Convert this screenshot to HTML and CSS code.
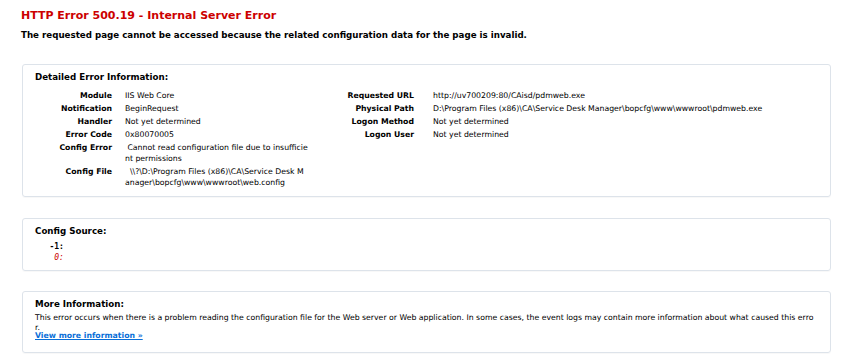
FILE: index.html
```html
<html>

<head>
  <meta charset="utf-8">
  <link rel="stylesheet" href="styles.css">
</head>

<body>
  <div id="header">
    <h1>HTTP Error 500.19 - Internal Server Error</h1>
    <h2>The requested page cannot be accessed because the related configuration data for the page is invalid.</h2>
  </div>

  <div id="content">

    <div class="box box-details">
      <h3>Detailed Error Information:</h3>
      <div class="details">
        <div class="details-col details-left">
          <div class="label">Module</div>
          <div class="value">IIS Web Core</div>
          <div class="label">Notification</div>
          <div class="value">BeginRequest</div>
          <div class="label">Handler</div>
          <div class="value">Not yet determined</div>
          <div class="label">Error Code</div>
          <div class="value">0x80070005</div>
          <div class="label">Config Error</div>
          <div class="value">&nbsp;Cannot read configuration file due to insufficient permissions</div>
          <div class="label">Config File</div>
          <div class="value">&nbsp;&nbsp;\\?\D:\Program Files (x86)\CA\Service Desk Manager\bopcfg\www\wwwroot\web.config</div>
        </div>
        <div class="details-col details-right">
          <div class="label">Requested URL</div>
          <div class="value">http://uv700209:80/CAisd/pdmweb.exe</div>
          <div class="label">Physical Path</div>
          <div class="value">D:\Program Files (x86)\CA\Service Desk Manager\bopcfg\www\wwwroot\pdmweb.exe</div>
          <div class="label">Logon Method</div>
          <div class="value">Not yet determined</div>
          <div class="label">Logon User</div>
          <div class="value">Not yet determined</div>
        </div>
      </div>
    </div>

    <div class="box box-source">
      <h3>Config Source:</h3>
      <pre class="source"><code>   -1: </code>
<code class="highlight">    0: </code></pre>
    </div>

    <div class="box box-info">
      <h3>More Information:</h3>
      <p class="info">This error occurs when there is a problem reading the configuration file for the Web server or Web application. In some cases, the event logs may contain more information about what caused this error.</p>
      <a class="more" href="#">View more information &raquo;</a>
    </div>

  </div>
</body>

</html>
```

FILE: styles.css
```css
* {
  margin: 0;
  padding: 0;
  box-sizing: border-box;
}

body {
  font-family: "DejaVu Sans", Verdana, sans-serif;
  font-size: 7.75px;
  color: #000;
  background: #fff;
}

#header {
  padding: 8px 21px 0;
}

h1 {
  font-size: 11px;
  font-weight: bold;
  color: #cc0000;
  line-height: 16px;
}

h2 {
  font-size: 8.7px;
  font-weight: bold;
  line-height: 12px;
  margin-top: 5px;
}

#content {
  padding: 0 26px 0 22px;
}

.box {
  border: 1px solid #dde3ea;
  border-radius: 3px;
  box-shadow: 0 1px 1px rgba(0, 0, 0, 0.03);
  padding: 6px 12px 8px;
  margin-top: 20px;
}

.box-details {
  margin-top: 23px;
}

.box-source {
  margin-top: 21px;
  padding-bottom: 7px;
}

.box-info {
  padding-bottom: 11px;
}

h3 {
  font-size: 8.7px;
  font-weight: bold;
  line-height: 12px;
}

.details {
  display: flex;
  margin-top: 7px;
}

.details-col {
  display: grid;
  column-gap: 13px;
  row-gap: 2px;
  align-content: start;
  line-height: 11px;
}

.details-left {
  grid-template-columns: 77px 183px;
  width: 266px;
}

.details-right {
  grid-template-columns: 113px auto;
  column-gap: 19px;
}

.label {
  font-weight: bold;
  text-align: right;
}

.value {
  word-break: break-all;
}

.source {
  font-family: "DejaVu Sans Mono", "Liberation Mono", monospace;
  font-size: 8px;
  font-weight: bold;
  line-height: 11px;
  margin-top: 4px;
}

.highlight {
  color: #cc0000;
  font-style: italic;
  font-weight: normal;
}

.info {
  line-height: 10px;
  word-break: break-all;
  margin-top: 3px;
}

.more {
  display: block;
  width: fit-content;
  margin-top: -2px;
  font-weight: bold;
  color: #0a6fd8;
  text-decoration: underline;
  line-height: 10px;
}
```
